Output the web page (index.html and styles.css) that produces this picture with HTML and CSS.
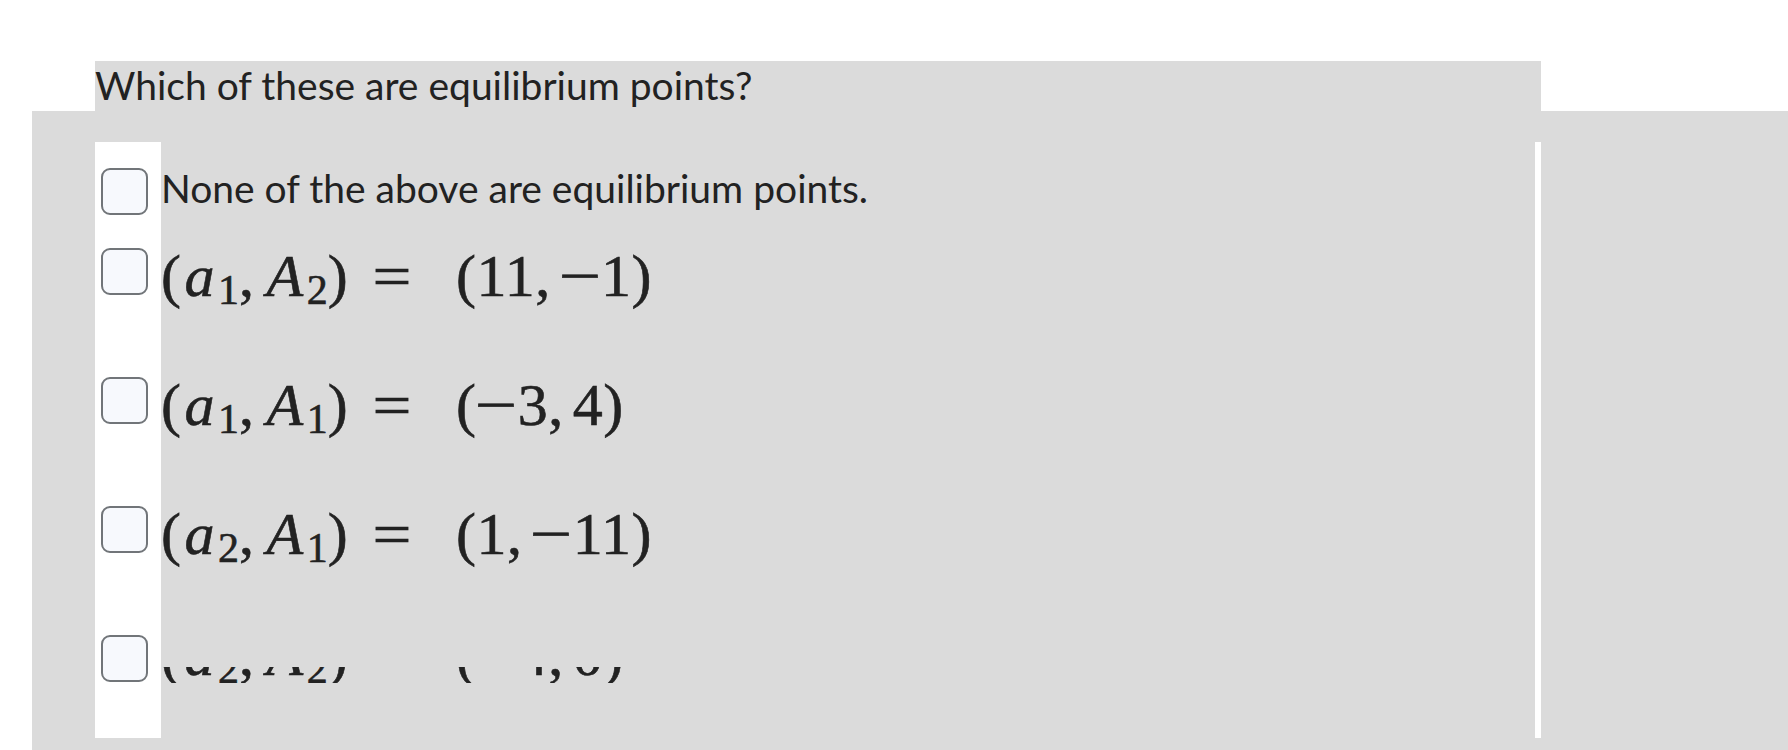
FILE: index.html
```html
<!DOCTYPE html>
<html lang="en">
<head>
  <meta charset="UTF-8" />
  <title>Quiz - Equilibrium points</title>
  <meta name="viewport" content="width=device-width, initial-scale=1.0" />
  <link rel="stylesheet" href="styles.css">
</head>
<body>

<div class="quiz">
  <!-- Question -->
  <div class="question-text">Which of these are equilibrium points?</div>

  <!-- Answers -->
  <div class="question-body">
    <div class="choices">

      <label class="choice choice-text">
        <input type="checkbox" class="choice-box" />
        <span class="choice-label">None of the above are equilibrium points.</span>
      </label>

      <label class="choice">
        <input type="checkbox" class="choice-box" />
        <span class="math">
          <span class="lhs">(<var>a</var><sub>1</sub><span class="punct">,</span><var>A</var><sub>2</sub>)</span>
          <span class="rel">=</span>
          <span class="rhs">(11<span class="punct">,</span><span class="minus">−</span>1)</span>
        </span>
      </label>

      <label class="choice">
        <input type="checkbox" class="choice-box" />
        <span class="math">
          <span class="lhs">(<var>a</var><sub>1</sub><span class="punct">,</span><var>A</var><sub>1</sub>)</span>
          <span class="rel">=</span>
          <span class="rhs">(<span class="minus">−</span>3<span class="punct">,</span>4)</span>
        </span>
      </label>

      <label class="choice">
        <input type="checkbox" class="choice-box" />
        <span class="math">
          <span class="lhs">(<var>a</var><sub>2</sub><span class="punct">,</span><var>A</var><sub>1</sub>)</span>
          <span class="rel">=</span>
          <span class="rhs">(1<span class="punct">,</span><span class="minus">−</span>11)</span>
        </span>
      </label>

      <label class="choice">
        <input type="checkbox" class="choice-box" />
        <span class="math math-cut">
          <span class="lhs">(<var>a</var><sub>2</sub><span class="punct">,</span><var>A</var><sub>2</sub>)</span>
          <span class="rel">=</span>
          <span class="rhs">(<span class="minus">−</span>4<span class="punct">,</span>0)</span>
        </span>
      </label>

    </div>
  </div>
</div>

</body>
</html>
```

FILE: styles.css
```css
:root {
  --shade: #dbdbdb;
  --text: #222222;
  --box-border: #717579;
  --box-fill: #f7f9fd;
}

* {
  box-sizing: border-box;
}

body {
  margin: 0;
  background: #ffffff;
  font-family: 'Lato', 'Noto Sans', sans-serif;
  color: var(--text);
  overflow: hidden;
}

.quiz {
  padding-top: 61px;
}

/* Question text */
.question-text {
  margin-left: 95px;
  width: 1446px;
  height: 50px;
  background: var(--shade);
  font-size: 39px;
  line-height: 48px;
}

/* Answer area */
.question-body {
  margin-left: 32px;
  background: var(--shade);
  padding: 31px 247px 12px 63px;
}

.choices {
  height: 596px;
  padding-top: 26px;
  /* white strip for the boxes, grey for the labels, thin white edge */
  background: linear-gradient(to right,
    #ffffff 66px,
    var(--shade) 66px,
    var(--shade) calc(100% - 6px),
    #ffffff calc(100% - 6px));
}

.choice {
  display: flex;
  align-items: flex-start;
  height: 129px;
  cursor: pointer;
}

.choice-text {
  height: 80px;
}

.choice-box {
  appearance: none;
  -webkit-appearance: none;
  flex: none;
  width: 47px;
  height: 47px;
  margin: 0 13px 0 6px;
  border: 2px solid var(--box-border);
  border-radius: 9px;
  background: var(--box-fill);
  cursor: pointer;
}

.choice-label {
  font-size: 39px;
  line-height: 40px;
}

/* Formulas */
.math {
  display: inline-flex;
  align-items: baseline;
  font-family: 'Liberation Serif', 'Times New Roman', serif;
  font-size: 60px;
  line-height: 56px;
  white-space: nowrap;
  -webkit-text-stroke: 0.6px currentColor;
}

.lhs {
  letter-spacing: 3.5px;
}

.rhs {
  letter-spacing: 0.5px;
}

.math var {
  font-style: italic;
}

.math sub {
  font-size: 0.7em;
  line-height: 0;
  vertical-align: -0.18em;
  letter-spacing: 0;
}

.punct {
  margin-right: 9px;
}

.minus {
  display: inline-block;
  margin: 0 4px 0 3px;
  transform: scaleX(1.25);
}

.rel {
  display: inline-block;
  margin: 0 47px 0 24px;
  transform: scaleX(1.15);
}

.math-cut {
  margin-top: -8px;
  clip-path: inset(40px 0 0 0);
}
```
